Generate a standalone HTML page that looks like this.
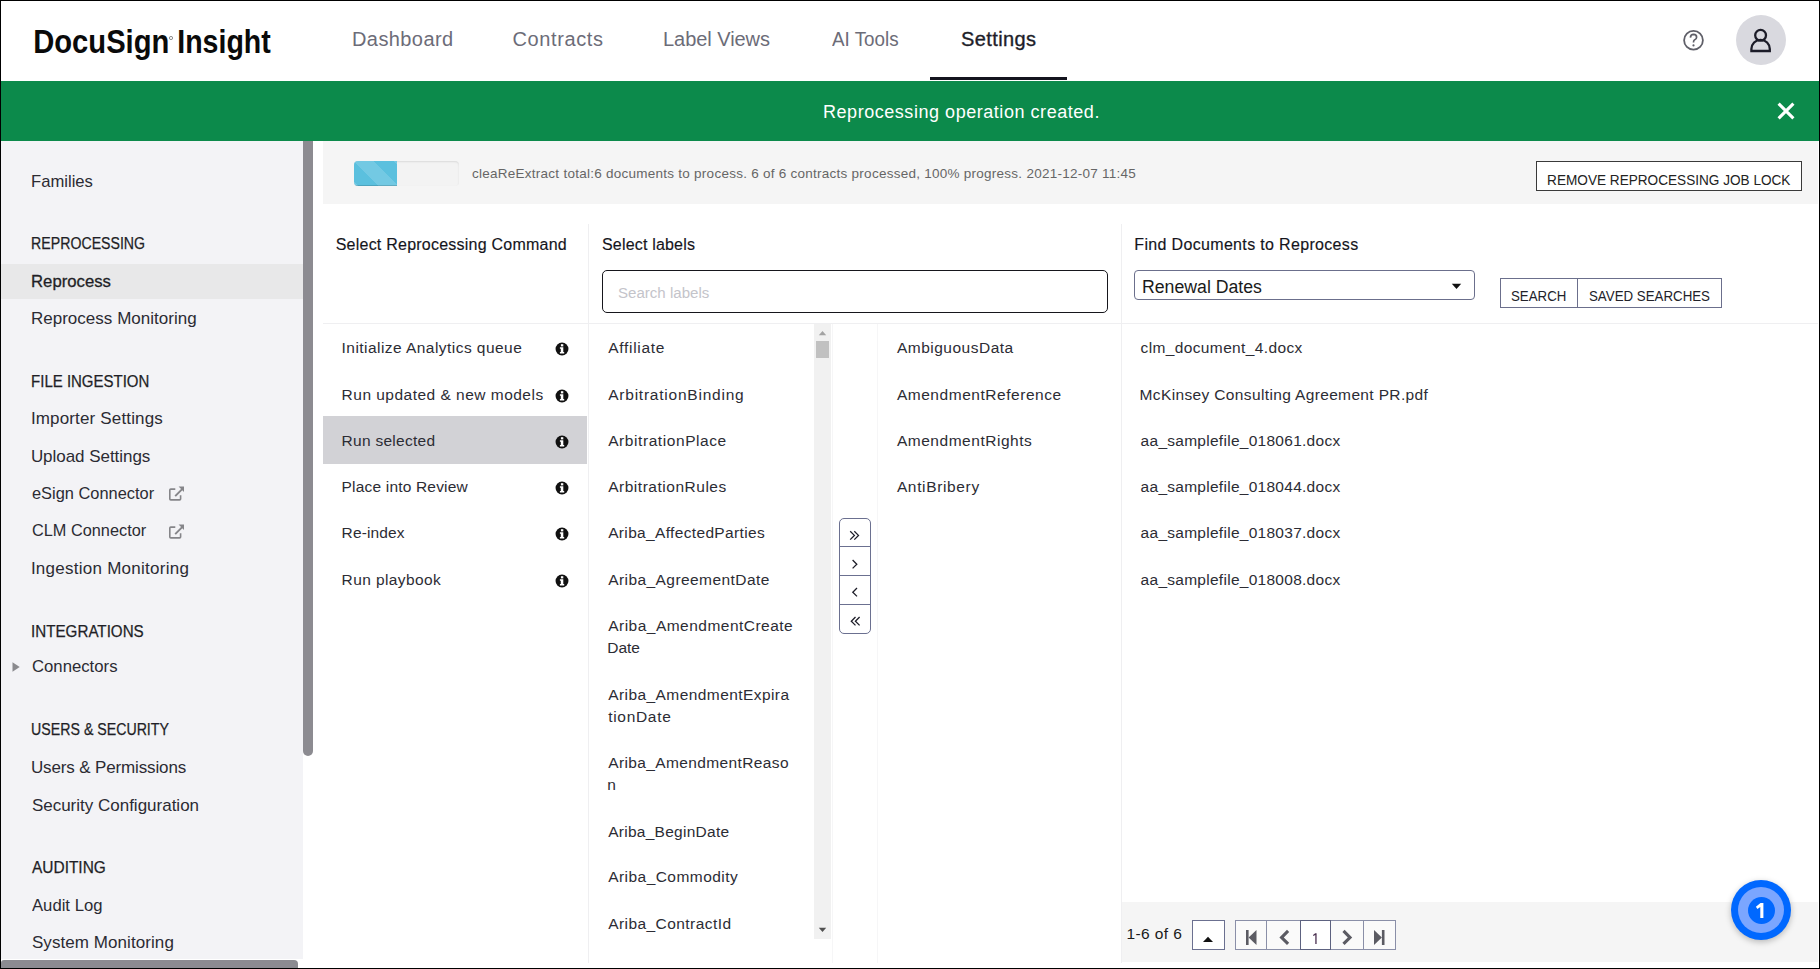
<!DOCTYPE html>
<html><head><meta charset="utf-8">
<style>
html,body{margin:0;padding:0;width:1820px;height:969px;overflow:hidden;background:#000;}
body{position:relative;font-family:"Liberation Sans",sans-serif;}
.a{position:absolute;box-sizing:border-box;}
.t{position:absolute;white-space:nowrap;font-family:"Liberation Sans",sans-serif;}
#page{position:absolute;left:1px;top:1px;width:1818px;height:967px;background:#fff;overflow:hidden;}
</style></head><body>
<div id="page"></div>
<!-- header -->
<div class="a" style="left:169px;top:36px;width:3.5px;height:3.5px;border-radius:50%;border:0.8px solid #777;"></div>
<div class="a" style="left:930px;top:77px;width:137px;height:3px;background:#14141e;"></div>
<svg class="a" style="left:1680px;top:27px" width="28" height="28" viewBox="0 0 28 28">
  <circle cx="13.5" cy="13.2" r="9.4" fill="none" stroke="#5f5f68" stroke-width="1.8"/>
  <path d="M10.4 10.6 Q10.6 7.4 13.6 7.4 Q16.6 7.5 16.6 10.2 Q16.6 12.1 14.4 13.1 Q13.5 13.6 13.5 15.4" fill="none" stroke="#5f5f68" stroke-width="1.7"/>
  <circle cx="13.5" cy="18.4" r="1.1" fill="#5f5f68"/>
</svg>
<div class="a" style="left:1736px;top:15px;width:50px;height:50px;border-radius:50%;background:#d9d9df;"></div>
<svg class="a" style="left:1736px;top:15px" width="50" height="50" viewBox="0 0 50 50">
  <circle cx="24.6" cy="20.3" r="5.4" fill="none" stroke="#1c1c28" stroke-width="2.3"/>
  <path d="M15.4 36 L15.4 34 A9.2 9.2 0 0 1 33.8 34 L33.8 36 Z" fill="none" stroke="#1c1c28" stroke-width="2.3" stroke-linejoin="miter"/>
</svg>
<!-- banner -->
<div class="a" style="left:1px;top:81px;width:1818px;height:60px;background:#0c8a4b;"></div>
<svg class="a" style="left:1776px;top:101px" width="20" height="20" viewBox="0 0 20 20">
  <path d="M2.6 2.6 L17.4 17.4 M17.4 2.6 L2.6 17.4" stroke="#fff" stroke-width="3.1"/>
</svg>
<!-- sidebar -->
<div class="a" style="left:1px;top:141px;width:302px;height:818px;background:#f3f3f6;"></div>
<div class="a" style="left:1px;top:264px;width:302px;height:35px;background:#e8e8e9;"></div>
<div class="a" style="left:303px;top:141px;width:10px;height:615px;background:#8c8b91;border-radius:0 0 5px 5px;"></div>
<div class="a" style="left:1px;top:960px;width:297px;height:8px;background:#8c8b91;border-radius:3px 4px 0 0;"></div>
<svg class="a" style="left:10px;top:660px" width="12" height="14" viewBox="0 0 12 14">
  <path d="M2.5 2.2 L9.7 7 L2.5 11.8 Z" fill="#8a8a8e"/>
</svg>
<svg class="a" style="left:166px;top:484px" width="20" height="18" viewBox="0 0 20 18">
  <path d="M9.3 5.1 H4.8 Q3.8 5.1 3.8 6.1 V14.9 Q3.8 15.9 4.8 15.9 H13.6 Q14.6 15.9 14.6 14.9 V11.3" fill="none" stroke="#858589" stroke-width="1.6"/>
  <path d="M9.2 12.2 L16.2 5.2" stroke="#858589" stroke-width="1.9"/>
  <path d="M12.6 2.6 H18 V8 Z" fill="#858589"/>
</svg>
<svg class="a" style="left:166px;top:522px" width="20" height="18" viewBox="0 0 20 18">
  <path d="M9.3 5.1 H4.8 Q3.8 5.1 3.8 6.1 V14.9 Q3.8 15.9 4.8 15.9 H13.6 Q14.6 15.9 14.6 14.9 V11.3" fill="none" stroke="#858589" stroke-width="1.6"/>
  <path d="M9.2 12.2 L16.2 5.2" stroke="#858589" stroke-width="1.9"/>
  <path d="M12.6 2.6 H18 V8 Z" fill="#858589"/>
</svg>
<!-- status bar -->
<div class="a" style="left:323px;top:141px;width:1495px;height:63px;background:#f5f5f5;"></div>
<div class="a" style="left:354px;top:161px;width:105px;height:25px;border-radius:4px;background:#f3f3f3;box-shadow:inset 0 1px 2px rgba(0,0,0,.1);overflow:hidden;">
  <div style="position:absolute;left:0;top:0;width:43px;height:25px;background-color:#5bc0de;background-image:linear-gradient(45deg,rgba(255,255,255,.15) 25%,transparent 25%,transparent 50%,rgba(255,255,255,.15) 50%,rgba(255,255,255,.15) 75%,transparent 75%,transparent);background-size:40px 40px;box-shadow:inset 0 -1px 0 rgba(0,0,0,.15);"></div>
</div>
<div class="a" style="left:1536px;top:161px;width:266px;height:30px;border:1px solid #3a3a3a;background:#fff;"></div>
<!-- grid lines -->
<div class="a" style="left:588px;top:224px;width:1px;height:739px;background:#efeff1;"></div>
<div class="a" style="left:1121px;top:224px;width:1px;height:739px;background:#efeff1;"></div>
<div class="a" style="left:323px;top:323px;width:1495px;height:1px;background:#efeff1;"></div>
<div class="a" style="left:832px;top:324px;width:1px;height:639px;background:#f6f6f7;"></div>
<div class="a" style="left:877px;top:324px;width:1px;height:639px;background:#f6f6f7;"></div>
<!-- search input -->
<div class="a" style="left:602px;top:270px;width:506px;height:43px;border:1.6px solid #16161c;border-radius:5px;background:#fff;"></div>
<!-- select -->
<div class="a" style="left:1134px;top:270px;width:341px;height:30px;border:1px solid #6b6f8c;border-radius:4px;background:#fff;"></div>
<svg class="a" style="left:1450px;top:282px" width="14" height="9" viewBox="0 0 14 9"><path d="M1.8 1.8 H11.2 L6.5 7 Z" fill="#111"/></svg>
<!-- search buttons -->
<div class="a" style="left:1500px;top:278px;width:222px;height:30px;border:1px solid #6b6f8c;background:#fff;"></div>
<div class="a" style="left:1577px;top:278px;width:1px;height:30px;background:#6b6f8c;"></div>
<!-- command highlight -->
<div class="a" style="left:323px;top:416px;width:264px;height:48px;background:#d2d2d6;"></div>
<svg class="a" style="left:554.25px;top:340.60px" width="16" height="16" viewBox="0 0 16 16"><circle cx="8" cy="8" r="6.45" fill="#111"/><rect x="6.9" y="3.2" width="2.4" height="2.2" fill="#fff"/><path d="M5.9 6.3 H9.3 V10.9 H10.2 V12.4 H5.9 V10.9 H6.8 V7.7 H5.9 Z" fill="#fff"/></svg>
<svg class="a" style="left:554.25px;top:387.60px" width="16" height="16" viewBox="0 0 16 16"><circle cx="8" cy="8" r="6.45" fill="#111"/><rect x="6.9" y="3.2" width="2.4" height="2.2" fill="#fff"/><path d="M5.9 6.3 H9.3 V10.9 H10.2 V12.4 H5.9 V10.9 H6.8 V7.7 H5.9 Z" fill="#fff"/></svg>
<svg class="a" style="left:554.25px;top:433.60px" width="16" height="16" viewBox="0 0 16 16"><circle cx="8" cy="8" r="6.45" fill="#111"/><rect x="6.9" y="3.2" width="2.4" height="2.2" fill="#fff"/><path d="M5.9 6.3 H9.3 V10.9 H10.2 V12.4 H5.9 V10.9 H6.8 V7.7 H5.9 Z" fill="#fff"/></svg>
<svg class="a" style="left:554.25px;top:479.60px" width="16" height="16" viewBox="0 0 16 16"><circle cx="8" cy="8" r="6.45" fill="#111"/><rect x="6.9" y="3.2" width="2.4" height="2.2" fill="#fff"/><path d="M5.9 6.3 H9.3 V10.9 H10.2 V12.4 H5.9 V10.9 H6.8 V7.7 H5.9 Z" fill="#fff"/></svg>
<svg class="a" style="left:554.25px;top:525.60px" width="16" height="16" viewBox="0 0 16 16"><circle cx="8" cy="8" r="6.45" fill="#111"/><rect x="6.9" y="3.2" width="2.4" height="2.2" fill="#fff"/><path d="M5.9 6.3 H9.3 V10.9 H10.2 V12.4 H5.9 V10.9 H6.8 V7.7 H5.9 Z" fill="#fff"/></svg>
<svg class="a" style="left:554.25px;top:572.60px" width="16" height="16" viewBox="0 0 16 16"><circle cx="8" cy="8" r="6.45" fill="#111"/><rect x="6.9" y="3.2" width="2.4" height="2.2" fill="#fff"/><path d="M5.9 6.3 H9.3 V10.9 H10.2 V12.4 H5.9 V10.9 H6.8 V7.7 H5.9 Z" fill="#fff"/></svg>
<!-- labels scrollbar -->
<div class="a" style="left:814px;top:324px;width:17px;height:615px;background:#f1f1f1;"></div>
<div class="a" style="left:816px;top:341px;width:13px;height:17px;background:#c1c1c1;"></div>
<svg class="a" style="left:814px;top:324px" width="17" height="17" viewBox="0 0 17 17"><path d="M4.8 11.2 H12.2 L8.5 7 Z" fill="#a3a3a3"/></svg>
<svg class="a" style="left:814px;top:922px" width="17" height="17" viewBox="0 0 17 17"><path d="M4.8 5.8 H12.2 L8.5 10 Z" fill="#505050"/></svg>
<!-- transfer buttons -->
<div class="a" style="left:839px;top:518px;width:32px;height:116px;border:1px solid #6b7090;border-radius:5px;background:#fff;"></div>
<div class="a" style="left:839px;top:546px;width:32px;height:1px;background:#6b7090;"></div>
<div class="a" style="left:839px;top:575px;width:32px;height:1px;background:#6b7090;"></div>
<div class="a" style="left:839px;top:604px;width:32px;height:1px;background:#6b7090;"></div>
<svg class="a" style="left:839px;top:519px" width="32" height="116" viewBox="0 0 32 116">
  <g fill="none" stroke="#1d1d28" stroke-width="1.3">
    <path d="M11.2 12.2 L15.4 16.4 L11.2 20.6 M15.3 12.2 L19.5 16.4 L15.3 20.6"/>
    <path d="M13.6 41 L17.8 45.2 L13.6 49.4"/>
    <path d="M18 69 L13.8 73.2 L18 77.4"/>
    <path d="M16.5 98 L12.3 102.2 L16.5 106.4 M20.6 98 L16.4 102.2 L20.6 106.4"/>
  </g>
</svg>
<!-- footer -->
<div class="a" style="left:1122px;top:902px;width:696px;height:60px;background:#f5f5f5;"></div>
<div class="a" style="left:1192px;top:920px;width:33px;height:30px;border:1px solid #6b7090;background:#fff;"></div>
<svg class="a" style="left:1192px;top:920px" width="33" height="30" viewBox="0 0 33 30"><path d="M11 22 H21 L16 16.8 Z" fill="#111"/></svg>
<div class="a" style="left:1235px;top:920px;width:161px;height:30px;border:1px solid #8a8fa8;background:#fafafa;"></div>
<div class="a" style="left:1266px;top:920px;width:1px;height:30px;background:#8a8fa8;"></div>
<div class="a" style="left:1300px;top:920px;width:31px;height:30px;border:1px solid #5d6280;background:#fff;"></div>
<div class="a" style="left:1363px;top:920px;width:1px;height:30px;background:#8a8fa8;"></div>
<svg class="a" style="left:1235px;top:920px" width="161" height="30" viewBox="0 0 161 30">
  <g fill="#5b5b63">
    <rect x="11" y="10" width="2.6" height="15"/>
    <path d="M21.5 10 V25 L13.6 17.5 Z"/>
    <path d="M52 9.8 L54.2 12 L48.8 17.4 L54.2 22.8 L52 25 L44.4 17.4 Z"/>
    <path d="M109.6 9.8 L107.4 12 L112.8 17.4 L107.4 22.8 L109.6 25 L117.2 17.4 Z"/>
    <path d="M139 10 V25 L146.9 17.5 Z"/>
    <rect x="146.9" y="10" width="2.6" height="15"/>
  </g>
</svg>
<svg class="a" style="left:1300px;top:920px" width="31" height="30" viewBox="0 0 31 30"><path d="M15.3 13.2 H16.6 V24 H15.3 V14.9 L13.4 16 L13 15 Z" fill="#4a3050"/></svg>
<!-- badge -->
<div class="a" style="left:1731px;top:880px;width:60px;height:60px;border-radius:50%;background:#0068ff;box-shadow:0 2px 6px rgba(0,0,0,.25);"></div>
<div class="a" style="left:1738px;top:887px;width:46px;height:46px;border-radius:50%;background:#7ba6ff;"></div>
<div class="a" style="left:1747.5px;top:896.5px;width:27px;height:27px;border-radius:50%;background:#0068ff;"></div>
<svg class="a" style="left:1750px;top:898px" width="22" height="24" viewBox="0 0 22 24"><path d="M10.5 5 H13.4 V19.9 H10.3 V9.1 L7.4 11.1 L5.9 8.7 Z" fill="#fff"/></svg>
<div class="t" style="left:33.00px;top:22.00px;font-size:33px;line-height:40px;font-weight:700;color:#0a0a0a;letter-spacing:0.000px;transform:scaleX(0.8837);transform-origin:2.00px 0;">DocuSign</div>
<div class="t" style="left:177.00px;top:22.00px;font-size:33px;line-height:40px;font-weight:700;color:#0a0a0a;letter-spacing:0.000px;transform:scaleX(0.8638);transform-origin:2.00px 0;">Insight</div>
<div class="t" style="left:352.00px;top:27.00px;font-size:20px;line-height:24px;font-weight:400;color:#6c6c78;letter-spacing:0.410px;">Dashboard</div>
<div class="t" style="left:512.50px;top:27.00px;font-size:20px;line-height:24px;font-weight:400;color:#6c6c78;letter-spacing:0.614px;">Contracts</div>
<div class="t" style="left:663.00px;top:27.00px;font-size:20px;line-height:24px;font-weight:400;color:#6c6c78;letter-spacing:-0.048px;">Label Views</div>
<div class="t" style="left:832.00px;top:27.00px;font-size:20px;line-height:24px;font-weight:400;color:#6c6c78;letter-spacing:0.000px;transform:scaleX(0.9418);transform-origin:0.00px 0;">AI Tools</div>
<div class="t" style="left:961.00px;top:27.00px;font-size:20px;line-height:24px;font-weight:400;color:#1e1e2a;letter-spacing:0.391px;-webkit-text-stroke:0.35px #1e1e2a;">Settings</div>
<div class="t" style="left:823.00px;top:101.00px;font-size:18px;line-height:22px;font-weight:400;color:#ffffff;letter-spacing:0.541px;">Reprocessing operation created.</div>
<div class="t" style="left:472.00px;top:166.00px;font-size:13.5px;line-height:16px;font-weight:400;color:#666666;letter-spacing:0.257px;">cleaReExtract total:6 documents to process. 6 of 6 contracts processed, 100% progress. 2021-12-07 11:45</div>
<div class="t" style="left:1547.00px;top:170.00px;font-size:15.5px;line-height:19px;font-weight:400;color:#222222;letter-spacing:0.000px;transform:scaleX(0.8773);transform-origin:1.00px 0;">REMOVE REPROCESSING JOB LOCK</div>
<div class="t" style="left:30.90px;top:172.00px;font-size:17px;line-height:20px;font-weight:400;color:#2b2b33;letter-spacing:0.000px;transform:scaleX(0.9776);transform-origin:1.00px 0;">Families</div>
<div class="t" style="left:30.90px;top:234.00px;font-size:16px;line-height:19px;font-weight:400;color:#1f1f26;letter-spacing:0.000px;-webkit-text-stroke:0.25px #1f1f26;transform:scaleX(0.8841);transform-origin:1.00px 0;">REPROCESSING</div>
<div class="t" style="left:30.90px;top:272.00px;font-size:17px;line-height:20px;font-weight:400;color:#1f1f26;letter-spacing:0.000px;-webkit-text-stroke:0.3px #1f1f26;transform:scaleX(0.9830);transform-origin:1.00px 0;">Reprocess</div>
<div class="t" style="left:30.90px;top:309.00px;font-size:17px;line-height:20px;font-weight:400;color:#2b2b33;letter-spacing:0.026px;">Reprocess Monitoring</div>
<div class="t" style="left:30.90px;top:372.00px;font-size:16px;line-height:19px;font-weight:400;color:#1f1f26;letter-spacing:0.000px;-webkit-text-stroke:0.25px #1f1f26;transform:scaleX(0.9367);transform-origin:1.00px 0;">FILE INGESTION</div>
<div class="t" style="left:30.90px;top:409.00px;font-size:17px;line-height:20px;font-weight:400;color:#2b2b33;letter-spacing:0.154px;">Importer Settings</div>
<div class="t" style="left:30.90px;top:447.00px;font-size:17px;line-height:20px;font-weight:400;color:#2b2b33;letter-spacing:-0.044px;">Upload Settings</div>
<div class="t" style="left:31.90px;top:484.00px;font-size:17px;line-height:20px;font-weight:400;color:#2b2b33;letter-spacing:0.000px;transform:scaleX(0.9648);transform-origin:0.00px 0;">eSign Connector</div>
<div class="t" style="left:31.90px;top:521.00px;font-size:17px;line-height:20px;font-weight:400;color:#2b2b33;letter-spacing:0.000px;transform:scaleX(0.9591);transform-origin:0.00px 0;">CLM Connector</div>
<div class="t" style="left:30.90px;top:559.00px;font-size:17px;line-height:20px;font-weight:400;color:#2b2b33;letter-spacing:0.256px;">Ingestion Monitoring</div>
<div class="t" style="left:30.90px;top:622.00px;font-size:16px;line-height:19px;font-weight:400;color:#1f1f26;letter-spacing:0.000px;-webkit-text-stroke:0.25px #1f1f26;transform:scaleX(0.9484);transform-origin:1.00px 0;">INTEGRATIONS</div>
<div class="t" style="left:31.90px;top:657.00px;font-size:17px;line-height:20px;font-weight:400;color:#2b2b33;letter-spacing:0.000px;transform:scaleX(0.9834);transform-origin:0.00px 0;">Connectors</div>
<div class="t" style="left:30.90px;top:720.00px;font-size:16px;line-height:19px;font-weight:400;color:#1f1f26;letter-spacing:0.000px;-webkit-text-stroke:0.25px #1f1f26;transform:scaleX(0.8857);transform-origin:1.00px 0;">USERS &amp; SECURITY</div>
<div class="t" style="left:30.90px;top:758.00px;font-size:17px;line-height:20px;font-weight:400;color:#2b2b33;letter-spacing:-0.136px;">Users &amp; Permissions</div>
<div class="t" style="left:31.90px;top:796.00px;font-size:17px;line-height:20px;font-weight:400;color:#2b2b33;letter-spacing:-0.005px;">Security Configuration</div>
<div class="t" style="left:31.90px;top:858.00px;font-size:16px;line-height:19px;font-weight:400;color:#1f1f26;letter-spacing:0.000px;-webkit-text-stroke:0.25px #1f1f26;transform:scaleX(0.9658);transform-origin:0.00px 0;">AUDITING</div>
<div class="t" style="left:31.90px;top:896.00px;font-size:17px;line-height:20px;font-weight:400;color:#2b2b33;letter-spacing:0.000px;transform:scaleX(0.9807);transform-origin:0.00px 0;">Audit Log</div>
<div class="t" style="left:31.90px;top:933.00px;font-size:17px;line-height:20px;font-weight:400;color:#2b2b33;letter-spacing:0.074px;">System Monitoring</div>
<div class="t" style="left:335.70px;top:235.00px;font-size:16px;line-height:19px;font-weight:400;color:#15151c;letter-spacing:0.231px;-webkit-text-stroke:0.15px #15151c;">Select Reprocessing Command</div>
<div class="t" style="left:602.00px;top:235.00px;font-size:16px;line-height:19px;font-weight:400;color:#15151c;letter-spacing:0.182px;-webkit-text-stroke:0.15px #15151c;">Select labels</div>
<div class="t" style="left:1134.30px;top:235.00px;font-size:16px;line-height:19px;font-weight:400;color:#15151c;letter-spacing:0.334px;-webkit-text-stroke:0.15px #15151c;">Find Documents to Reprocess</div>
<div class="t" style="left:618.00px;top:283.00px;font-size:15.5px;line-height:19px;font-weight:400;color:#c4c4ca;letter-spacing:0.000px;transform:scaleX(0.9717);transform-origin:0.00px 0;">Search labels</div>
<div class="t" style="left:1142.00px;top:276.00px;font-size:18px;line-height:22px;font-weight:400;color:#1a1a1a;letter-spacing:0.000px;transform:scaleX(0.9821);transform-origin:1.00px 0;">Renewal Dates</div>
<div class="t" style="left:1511.40px;top:287.00px;font-size:15px;line-height:18px;font-weight:400;color:#22222a;letter-spacing:0.000px;transform:scaleX(0.8852);transform-origin:0.00px 0;">SEARCH</div>
<div class="t" style="left:1588.50px;top:287.00px;font-size:15px;line-height:18px;font-weight:400;color:#22222a;letter-spacing:0.000px;transform:scaleX(0.8869);transform-origin:0.00px 0;">SAVED SEARCHES</div>
<div class="t" style="left:341.60px;top:338.00px;font-size:15.5px;line-height:19px;font-weight:400;color:#2c2c34;letter-spacing:0.451px;">Initialize Analytics queue</div>
<div class="t" style="left:341.60px;top:385.00px;font-size:15.5px;line-height:19px;font-weight:400;color:#2c2c34;letter-spacing:0.484px;">Run updated &amp; new models</div>
<div class="t" style="left:341.60px;top:431.00px;font-size:15.5px;line-height:19px;font-weight:400;color:#2c2c34;letter-spacing:0.277px;">Run selected</div>
<div class="t" style="left:341.60px;top:477.00px;font-size:15.5px;line-height:19px;font-weight:400;color:#2c2c34;letter-spacing:0.181px;">Place into Review</div>
<div class="t" style="left:341.60px;top:523.00px;font-size:15.5px;line-height:19px;font-weight:400;color:#2c2c34;letter-spacing:0.131px;">Re-index</div>
<div class="t" style="left:341.60px;top:570.00px;font-size:15.5px;line-height:19px;font-weight:400;color:#2c2c34;letter-spacing:0.397px;">Run playbook</div>
<div class="t" style="left:608.20px;top:338.00px;font-size:15.5px;line-height:19px;font-weight:400;color:#2c2c34;letter-spacing:0.709px;">Affiliate</div>
<div class="t" style="left:608.20px;top:385.00px;font-size:15.5px;line-height:19px;font-weight:400;color:#2c2c34;letter-spacing:0.775px;">ArbitrationBinding</div>
<div class="t" style="left:608.20px;top:431.00px;font-size:15.5px;line-height:19px;font-weight:400;color:#2c2c34;letter-spacing:0.574px;">ArbitrationPlace</div>
<div class="t" style="left:608.20px;top:477.00px;font-size:15.5px;line-height:19px;font-weight:400;color:#2c2c34;letter-spacing:0.519px;">ArbitrationRules</div>
<div class="t" style="left:608.20px;top:523.00px;font-size:15.5px;line-height:19px;font-weight:400;color:#2c2c34;letter-spacing:0.341px;">Ariba_AffectedParties</div>
<div class="t" style="left:608.20px;top:570.00px;font-size:15.5px;line-height:19px;font-weight:400;color:#2c2c34;letter-spacing:0.431px;">Ariba_AgreementDate</div>
<div class="t" style="left:608.20px;top:616.00px;font-size:15.5px;line-height:19px;font-weight:400;color:#2c2c34;letter-spacing:0.481px;">Ariba_AmendmentCreate</div>
<div class="t" style="left:607.20px;top:638.00px;font-size:15.5px;line-height:19px;font-weight:400;color:#2c2c34;letter-spacing:0.000px;">Date</div>
<div class="t" style="left:608.20px;top:685.00px;font-size:15.5px;line-height:19px;font-weight:400;color:#2c2c34;letter-spacing:0.426px;">Ariba_AmendmentExpira</div>
<div class="t" style="left:608.20px;top:707.00px;font-size:15.5px;line-height:19px;font-weight:400;color:#2c2c34;letter-spacing:0.698px;">tionDate</div>
<div class="t" style="left:608.20px;top:753.00px;font-size:15.5px;line-height:19px;font-weight:400;color:#2c2c34;letter-spacing:0.376px;">Ariba_AmendmentReaso</div>
<div class="t" style="left:607.20px;top:775.00px;font-size:15.5px;line-height:19px;font-weight:400;color:#2c2c34;letter-spacing:0.000px;">n</div>
<div class="t" style="left:608.20px;top:822.00px;font-size:15.5px;line-height:19px;font-weight:400;color:#2c2c34;letter-spacing:0.267px;">Ariba_BeginDate</div>
<div class="t" style="left:608.20px;top:867.00px;font-size:15.5px;line-height:19px;font-weight:400;color:#2c2c34;letter-spacing:0.455px;">Ariba_Commodity</div>
<div class="t" style="left:608.20px;top:914.00px;font-size:15.5px;line-height:19px;font-weight:400;color:#2c2c34;letter-spacing:0.434px;">Ariba_ContractId</div>
<div class="t" style="left:896.90px;top:338.00px;font-size:15.5px;line-height:19px;font-weight:400;color:#2c2c34;letter-spacing:0.503px;">AmbiguousData</div>
<div class="t" style="left:896.90px;top:385.00px;font-size:15.5px;line-height:19px;font-weight:400;color:#2c2c34;letter-spacing:0.537px;">AmendmentReference</div>
<div class="t" style="left:896.90px;top:431.00px;font-size:15.5px;line-height:19px;font-weight:400;color:#2c2c34;letter-spacing:0.532px;">AmendmentRights</div>
<div class="t" style="left:896.90px;top:477.00px;font-size:15.5px;line-height:19px;font-weight:400;color:#2c2c34;letter-spacing:0.645px;">AntiBribery</div>
<div class="t" style="left:1140.60px;top:338.00px;font-size:15.5px;line-height:19px;font-weight:400;color:#2c2c34;letter-spacing:0.365px;">clm_document_4.docx</div>
<div class="t" style="left:1139.60px;top:385.00px;font-size:15.5px;line-height:19px;font-weight:400;color:#2c2c34;letter-spacing:0.359px;">McKinsey Consulting Agreement PR.pdf</div>
<div class="t" style="left:1140.60px;top:431.00px;font-size:15.5px;line-height:19px;font-weight:400;color:#2c2c34;letter-spacing:0.272px;">aa_samplefile_018061.docx</div>
<div class="t" style="left:1140.60px;top:477.00px;font-size:15.5px;line-height:19px;font-weight:400;color:#2c2c34;letter-spacing:0.272px;">aa_samplefile_018044.docx</div>
<div class="t" style="left:1140.60px;top:523.00px;font-size:15.5px;line-height:19px;font-weight:400;color:#2c2c34;letter-spacing:0.272px;">aa_samplefile_018037.docx</div>
<div class="t" style="left:1140.60px;top:570.00px;font-size:15.5px;line-height:19px;font-weight:400;color:#2c2c34;letter-spacing:0.272px;">aa_samplefile_018008.docx</div>
<div class="t" style="left:1126.50px;top:924.00px;font-size:15.5px;line-height:19px;font-weight:400;color:#1a1a1a;letter-spacing:0.408px;">1-6 of 6</div>
</body></html>
